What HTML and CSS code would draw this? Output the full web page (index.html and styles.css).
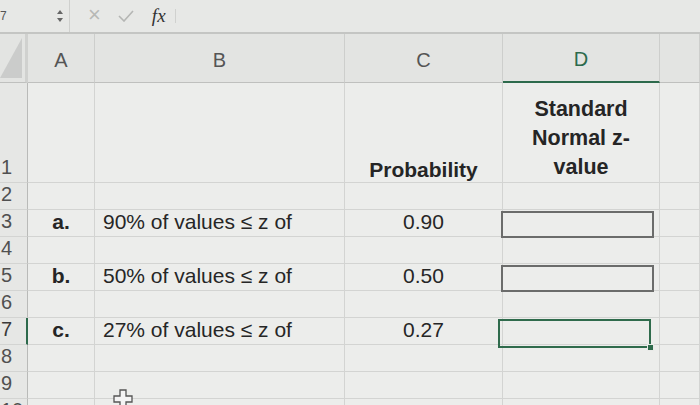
FILE: index.html
```html
<!DOCTYPE html>
<html>
<head>
<meta charset="utf-8">
<link rel="stylesheet" href="styles.css">
</head>
<body>
<div class="app">
  <div class="fbar">
    <div class="namebox">
      <span class="ref">7</span>
      <span class="spin"><span class="up"></span><span class="dn"></span></span>
    </div>
    <div class="fbtns">
      <span class="x">×</span>
      <svg class="chk" width="16" height="12" viewBox="0 0 16 12"><path d="M1 6 L6 11 L15 1" fill="none" stroke="#b5b6b4" stroke-width="1.6"/></svg>
      <span class="fx">fx</span>
      <span class="sep"></span>
    </div>
  </div>
  <div class="sheet">
    <div class="hd corner"><span class="tri"></span></div>
    <div class="hd">A</div>
    <div class="hd">B</div>
    <div class="hd">C</div>
    <div class="hd active">D</div>
    <div class="hd"></div>

    <div class="rh r1">1</div>
    <div class="c"></div>
    <div class="c"></div>
    <div class="c ctr bold r1c">Probability</div>
    <div class="c ctr bold wrap">Standard Normal z-value</div>
    <div class="c"></div>

    <div class="rh">2</div><div class="c"></div><div class="c"></div><div class="c"></div><div class="c"></div><div class="c"></div>

    <div class="rh">3</div>
    <div class="c ctr bold">a.</div>
    <div class="c txt">90% of values ≤ z of</div>
    <div class="c ctr">0.90</div>
    <div class="c top"><span class="box"></span></div>
    <div class="c"></div>

    <div class="rh">4</div><div class="c"></div><div class="c"></div><div class="c"></div><div class="c"></div><div class="c"></div>

    <div class="rh">5</div>
    <div class="c ctr bold">b.</div>
    <div class="c txt">50% of values ≤ z of</div>
    <div class="c ctr">0.50</div>
    <div class="c top"><span class="box"></span></div>
    <div class="c"></div>

    <div class="rh">6</div><div class="c"></div><div class="c"></div><div class="c"></div><div class="c"></div><div class="c"></div>

    <div class="rh sel">7</div>
    <div class="c ctr bold">c.</div>
    <div class="c txt">27% of values ≤ z of</div>
    <div class="c ctr">0.27</div>
    <div class="c top"><span class="box green"><span class="handle"></span></span></div>
    <div class="c"></div>

    <div class="rh">8</div><div class="c"></div><div class="c"></div><div class="c"></div><div class="c"></div><div class="c"></div>
    <div class="rh">9</div><div class="c"></div><div class="c top"><svg class="plus" width="20" height="20" viewBox="0 0 20 20"><path d="M7 1 H13 V7 H19 V13 H13 V19 H7 V13 H1 V7 H7 Z" fill="#f4f4f4" stroke="#555" stroke-width="1.3"/></svg></div><div class="c"></div><div class="c"></div><div class="c"></div>
    <div class="rh">10</div><div class="c"></div><div class="c"></div><div class="c"></div><div class="c"></div><div class="c"></div>
  </div>
</div>
</body>
</html>
```

FILE: styles.css
```css
* { box-sizing: border-box; }
html, body { margin: 0; padding: 0; }
body {
  width: 700px;
  height: 405px;
  overflow: hidden;
  background: #e9eae8;
  font-family: "Liberation Sans", Arial, sans-serif;
  color: #262626;
}
.app { width: 700px; height: 405px; overflow: hidden; }

.fbar {
  height: 34px;
  display: flex;
  background: #e7e8e6;
  border-bottom: 2px solid #c4c5c3;
}
.namebox {
  width: 70px;
  display: flex;
  align-items: center;
  justify-content: space-between;
  padding: 0 4px 0 0;
  border-right: 1px solid #cfd0ce;
}
.ref { font-size: 12px; margin-left: 0; color: #555; }
.spin { display: flex; flex-direction: column; gap: 4px; margin-right: 2px; }
.up, .dn { width: 0; height: 0; border-left: 3px solid transparent; border-right: 3px solid transparent; }
.up { border-bottom: 4px solid #666; }
.dn { border-top: 4px solid #666; }
.fbtns { display: flex; align-items: center; padding-left: 18px; }
.x { font-size: 22px; color: #b7b8b6; line-height: 1; margin-top: -2px; }
.chk { margin-left: 17px; }
.fx { font-family: "Liberation Serif", serif; font-style: italic; font-size: 19px; color: #333; margin-left: 18px; }
.sep { width: 1px; height: 14px; background: #d0d1cf; margin-left: 9px; }

.sheet {
  display: grid;
  grid-template-columns: 28px 67px 250px 158px 157px 40px;
  grid-template-rows: 49px 100px repeat(9, 27px);
}
.hd {
  background: #e3e4e2;
  border-right: 1px solid #cdcecc;
  border-bottom: 1px solid #bfc0be;
  display: flex;
  align-items: center;
  justify-content: center;
  font-size: 20px;
  color: #555;
  padding-top: 4px;
}
.hd.active { color: #2d6a4c; border-bottom: 2px solid #2d6a4c; }
.corner { position: relative; padding: 0; border-right: 3px solid #d0d1cf; }
.tri {
  position: absolute; left: 0; bottom: 4px;
  width: 0; height: 0;
  border-left: 22px solid transparent;
  border-bottom: 40px solid #cbcccb;
}
.rh {
  background: #e6e7e5;
  border-right: 1px solid #b9bab8;
  border-bottom: 1px solid #d3d4d2;
  font-size: 20px;
  color: #505050;
  display: flex;
  align-items: flex-end;
  padding-bottom: 3px;
  padding-left: 1px;
}
.rh.sel { border-right: 2px solid #2d6a4c; color: #3a3a3a; }
.c {
  border-right: 1px solid #d3d4d2;
  border-bottom: 1px solid #d3d4d2;
  background: #ecedeb;
  font-size: 21px;
  display: flex;
  align-items: flex-end;
  padding-bottom: 2px;
  position: relative;
  white-space: nowrap;
}
.top { z-index: 2; }
.ctr { justify-content: center; text-align: center; }
.bold { font-weight: bold; color: #252525; }
.txt { padding-left: 8px; }
.r1c { padding-bottom: 0; }
.wrap { line-height: 29px; padding: 0 10px 0; font-size: 21.5px; white-space: normal; }
.box {
  position: absolute;
  left: -2px; top: 1px; right: 5px; bottom: -2px;
  border: 2px solid #6b6c6b;
}
.box.green { border-color: #2f6b4c; left: -5px; top: 1px; right: 8px; bottom: -4px; }
.handle {
  position: absolute; right: -5px; bottom: -5px;
  width: 7px; height: 7px; background: #2f6b4c; border: 1px solid #e9eae8;
}
.plus { position: absolute; left: 18px; top: 17px; }
```
